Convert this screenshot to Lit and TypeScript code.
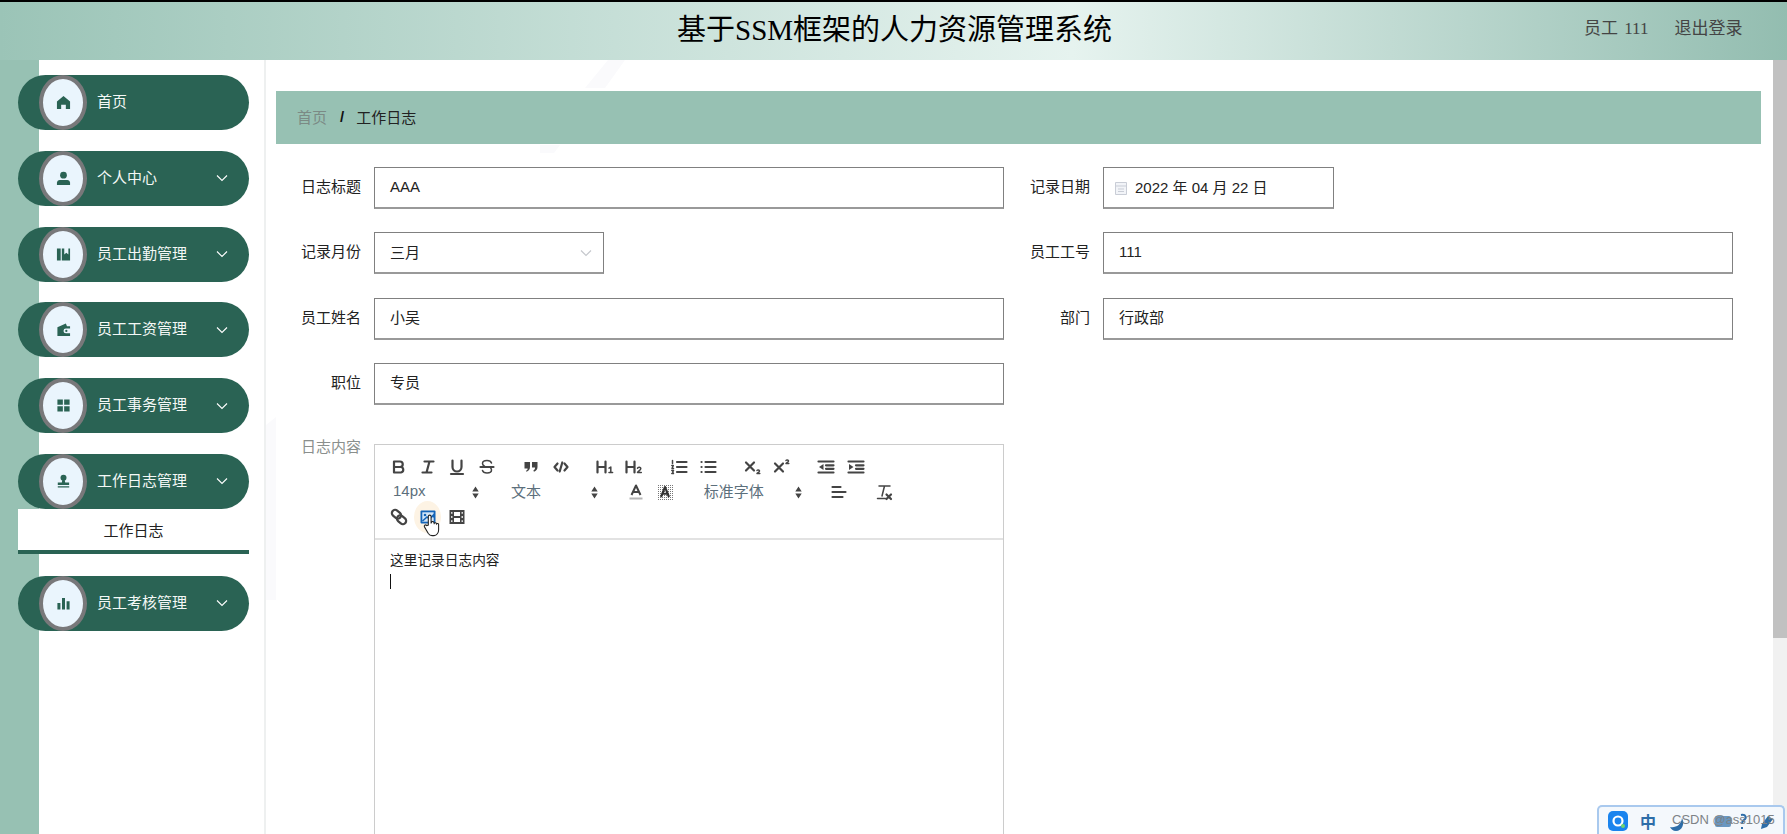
import { LitElement, html, css, svg } from "lit";
import { customElement } from "lit/decorators.js";

const g = (body: unknown) => html`<svg viewBox="0 0 18 18" width="18" height="18">${body}</svg>`;

const menuIcons: Record<string, unknown> = {
  home: svg`<path d="M8 1 1 7v8h4.500v-4.500h5V15H15V7z" fill="#2a6354"/>`,
  user: svg`<circle cx="8" cy="4.500" r="3.600" fill="#2a6354"/><path d="M1 15v-2.500c0-1.800 1.400-3 3-3h8c1.600 0 3 1.200 3 3V15z" fill="#2a6354"/>`,
  book: svg`<path d="M1 1.500h4v13H1zM6.200 1.500h2.600v6.500l2.200-1.800 2.200 1.800V1.500H15v13H6.200z" fill="#2a6354"/>`,
  wallet: svg`<path d="M1.500 5.500 10.500 1.500l1.200 3h3.300v2.500h-4.500a2.500 2.500 0 0 0 0 5h4.500V15H1.500z" fill="#2a6354"/><circle cx="11" cy="9.500" r="1.200" fill="#2a6354"/>`,
  grid: svg`<path d="M1.500 1.500h5.800v5.800H1.500zM8.700 1.500h5.800v5.800H8.700zM1.500 8.700h5.800v5.800H1.500zM8.700 8.700h5.800v5.800H8.700z" fill="#2a6354"/>`,
  stamp: svg`<circle cx="8" cy="4" r="3.200" fill="#2a6354"/><path d="M6.800 6h2.400l.6 3h4.200v2.600H1.900V9h4.300zM1.900 13h12.200v1.400H1.900z" fill="#2a6354"/>`,
  chart: svg`<path d="M1.500 7.500h3.200v7H1.500zM6.400 2h3.200v12.500H6.400zM11.300 5.500h3.200v9h-3.200z" fill="#2a6354"/>`,
};

const stroke = "fill:none;stroke:#444;stroke-width:2.200;stroke-linecap:round;stroke-linejoin:round";
const thin = "fill:none;stroke:#444;stroke-width:1.500;stroke-linecap:round;stroke-linejoin:round";
const tools: Record<string, unknown> = {
  bold: g(svg`<path style=${stroke} d="M4 3.500h6a2.700 2.700 0 0 1 0 5.500H4zM4 9h7a2.800 2.800 0 0 1 0 5.500H4z"/>`),
  italic: g(svg`<path style=${stroke} d="M5.500 3.500h9M3.500 14.500h9M10.500 3.500 7.500 14.500"/>`),
  underline: g(svg`<path style=${stroke} d="M4.500 2.500v6.500a4.500 4.500 0 0 0 9 0V2.500" stroke-width="1.700"/><path style=${stroke} d="M3 16h12"/>`),
  strike: g(svg`<path style=${thin} d="M13.500 5c-.5-1.600-2.200-2.500-4.500-2.500-2.700 0-4.500 1.200-4.500 3 0 1.200.7 2 2 2.700M4.500 12.500c.5 1.700 2.200 2.500 4.500 2.500 2.700 0 4.500-1.200 4.500-3 0-.8-.3-1.400-.8-2"/><path style=${stroke} d="M2.500 9h13"/>`),
  quote: g(svg`<path fill="#444" d="M2.500 4H8v5c0 2.500-1.500 4-3.500 4.800l-.7-1.300C5 12.800 5.600 12 5.600 10.500H2.500zM10 4h5.500v5c0 2.500-1.500 4-3.500 4.800l-.7-1.300c1.200-.7 1.800-1.500 1.800-3H10z"/>`),
  code: g(svg`<path style=${stroke} stroke-width="1.700" d="M5.500 5.500 2.500 9l3 3.500M12.500 5.500l3 3.500-3 3.500M10.300 4.500l-2.600 9"/>`),
  h1: g(svg`<path style=${stroke} d="M1.500 3.500v11M9.500 3.500v11M1.500 9h8"/><path style=${thin} d="M13 10.200 14.800 9v5.500M13 14.500h3.600"/>`),
  h2: g(svg`<path style=${stroke} d="M1.500 3.500v11M9.500 3.500v11M1.500 9h8"/><path style=${thin} d="M12.500 10.300c.3-1 2.900-1.500 3.300 0 .3 1.500-2.300 2.700-3.300 4.200h3.800"/>`),
  ol: g(svg`<path style=${stroke} d="M7 4h9.500M7 9h9.500M7 14h9.500"/><path style=${thin} d="M2.500 2.500v3M1.800 7.500h1.500L2 10.500h1.500M1.800 12.500h1.700l-.8 1.500.8 1.500H1.800"/>`),
  ul: g(svg`<path style=${stroke} d="M6.500 4h10M6.500 9h10M6.500 14h10M2.500 4h.1M2.500 9h.1M2.500 14h.1"/>`),
  sub: g(svg`<path style=${stroke} d="M2 4.500l8 8M10 4.500l-8 8" stroke-width="2.400"/><path style=${thin} d="M13 12.500c.3-.6 2.400-.8 2.500.4 0 1-1.500 1.600-2.500 2.600h2.800"/>`),
  sup: g(svg`<path style=${stroke} d="M2 5.500l8 8M10 5.500l-8 8" stroke-width="2.400"/><path style=${thin} d="M13 2.500c.3-.6 2.400-.8 2.500.4 0 1-1.500 1.600-2.500 2.600h2.800"/>`),
  outdent: g(svg`<path style=${stroke} d="M1.500 3.500h15M9 7.300h7.500M9 10.800h7.500M1.500 14.500h15"/><path fill="#444" d="M6.500 6v6L2 9z"/>`),
  indent: g(svg`<path style=${stroke} d="M1.500 3.500h15M9 7.300h7.500M9 10.800h7.500M1.500 14.500h15"/><path fill="#444" d="M2 6v6l4.500-3z"/>`),
  color: g(svg`<path style="fill:none;stroke:#444;stroke-width:2;stroke-linejoin:round" d="M4.500 12 9 2.500l4.500 9.500M6 9h6"/><path style="stroke:#b5b5b5;stroke-width:2" d="M2.500 15.500h13"/>`),
  background: g(svg`<defs><pattern id="dots" width="2" height="2" patternUnits="userSpaceOnUse"><rect width="1" height="1" fill="#777"/></pattern></defs><rect x="1" y="1" width="16" height="16" fill="url(#dots)"/><path style="fill:none;stroke:#333;stroke-width:2.100;stroke-linejoin:round" d="M5 14 9 4l4 10M6.300 10.800h5.400"/>`),
  align: g(svg`<path style=${stroke} d="M2.500 4h8M2.500 9h13M2.500 14h10"/>`),
  clean: g(svg`<path style=${thin} d="M4 3h11M9.500 3 7 13M2.500 15.500h8"/><path style=${stroke} d="M11.500 11.500l4.500 4.500M16 11.500l-4.500 4.500"/>`),
  link: g(svg`<rect x="1.500" y="3" width="10" height="6.500" rx="3.200" transform="rotate(40 6.500 6.200)" style=${stroke}/><rect x="6.500" y="8.500" width="10" height="6.500" rx="3.200" transform="rotate(40 11.500 11.800)" style=${stroke}/>`),
  image: g(svg`<rect x="1.500" y="2.500" width="15" height="13" rx="1" fill="#1565b8"/><rect x="3.300" y="4.300" width="11.400" height="9.400" fill="#d4e6f8"/><circle cx="6" cy="7" r="1.300" fill="#1565b8"/><path d="M3.500 13 8 9l2.500 2 4-4v2.500" fill="none" stroke="#1565b8" stroke-width="1.600"/>`),
  video: g(svg`<path fill="#444" fill-rule="evenodd" d="M1.500 2h15v14h-15zM6 4v4h6V4zM6 10v4h6v-4zM3.200 4v1.800h1.200V4zM13.600 4v1.800h1.200V4zM3.200 8.100v1.800h1.200V8.100zM13.600 8.100v1.800h1.200V8.100zM3.200 12.200V14h1.200v-1.800zM13.600 12.200V14h1.200v-1.800z"/>`),
};

const updown = html`<svg class="updown" viewBox="0 0 8 14" width="9" height="15"><path d="M4 1.500 7 6H1zM4 12.500 1 8h6z" fill="#444"/></svg>`;
const chevron = html`<svg class="chev" viewBox="0 0 14 10" width="14" height="10"><path d="M2 2.500l5 5 5-5" fill="none" stroke="currentColor" stroke-width="1.100"/></svg>`;

@customElement("app-root")
export class AppRoot extends LitElement {
  static styles = css`
    :host {
      display: block;
      height: 834px;
      overflow: hidden;
      position: relative;
      font-family: "Liberation Sans", "Noto Sans CJK SC", sans-serif;
      font-size: 15px;
      color: #222;
      background: #fff;
    }
    .top {
      height: 58px;
      border-top: 2px solid #000;
      position: relative;
      background: linear-gradient(90deg, #9bc4b7 0%, #e6f3ef 60%, #93bdb0 100%);
      font-family: "Liberation Serif", "Noto Sans CJK SC", serif;
    }
    .title {
      padding: 10px 0 0 677px;
      font-size: 29px;
      line-height: 36px;
      color: #000;
    }
    .who {
      position: absolute;
      top: 15px;
      left: 1584px;
      display: flex;
      gap: 26px;
      font-size: 17px;
      line-height: 24px;
      word-spacing: 2px;
      color: #444;
    }
    .body {
      display: flex;
      height: 774px;
    }
    .strip {
      width: 39px;
      background: #97c1b3;
      flex: none;
    }
    .side {
      width: 225px;
      flex: none;
      border-right: 2px solid #eef0f0;
      position: relative;
    }
    .menu {
      position: absolute;
      left: -21px;
      top: 15px;
      width: 231px;
      display: flex;
      flex-direction: column;
    }
    .pill {
      height: 55px;
      border-radius: 28px;
      background: #2a6354;
      color: #f4f8f6;
      display: flex;
      align-items: center;
      margin-bottom: 20.800px;
      font-size: 15px;
      flex: none;
    }
    .pill.open { margin-bottom: 0; }
    .bubble {
      width: 40px;
      height: 47px;
      border-radius: 50%;
      background: #eaf5fd;
      border: 4px solid #78787a;
      margin-left: 21px;
      display: flex;
      align-items: center;
      justify-content: center;
      flex: none;
    }
    .label {
      margin-left: 10px;
      flex: 1;
      padding-bottom: 4px;
    }
    .chev {
      margin-right: 20px;
      color: #fff;
    }
    .sub {
      height: 41px;
      line-height: 43px;
      text-align: center;
      border-bottom: 4px solid #2a6354;
      margin-bottom: 22px;
      font-size: 15px;
      color: #222;
      background: #fff;
    }
    .main {
      flex: 1;
      padding: 31px 12px 0 10px;
      min-width: 0;
      position: relative;
      z-index: 0;
    }
    .decor {
      position: absolute;
      left: 0;
      top: 0;
      z-index: -1;
    }
    .crumb {
      height: 53px;
      background: #97c1b3;
      display: flex;
      align-items: center;
      padding: 0 0 3px 21px;
      box-sizing: border-box;
    }
    .crumb .home { color: #7b8a85; }
    .crumb .sep {
      color: #111;
      font-weight: 700;
      margin: 0 12px 0 13px;
    }
    .form {
      display: grid;
      grid-template-columns: 630px 630px;
      column-gap: 99px;
      row-gap: 23.300px;
      padding: 23px 0 0 98px;
    }
    .field {
      display: flex;
      height: 42px;
      position: relative;
    }
    .field > .name {
      position: absolute;
      right: 100%;
      margin-right: 13px;
      line-height: 40px;
      white-space: nowrap;
    }
    .box {
      box-sizing: border-box;
      width: 100%;
      height: 42px;
      border: 1px solid #808080;
      border-bottom: 2px solid #999;
      padding: 0 15px;
      line-height: 37px;
      background: #fff;
    }
    .box.date {
      width: 231px;
      padding-left: 10px;
      display: flex;
      align-items: center;
      gap: 7px;
    }
    .box.select {
      width: 230px;
      display: flex;
      align-items: center;
      justify-content: space-between;
      padding-right: 10px;
    }
    .box.select .chev { margin: 0; color: #c4c7cc; }
    .editor-row {
      display: flex;
      padding: 39px 0 0 98px;
    }
    .editor-row .name {
      width: 0;
      white-space: nowrap;
      direction: rtl;
      position: relative;
      color: #8a8f8d;
      line-height: 20px;
      left: -13px;
      top: -7px;
    }
    .editor {
      width: 630px;
      box-sizing: border-box;
      border: 1px solid #ccc;
      height: 500px;
      background: #fff;
    }
    .toolbar {
      height: 95px;
      box-sizing: border-box;
      border-bottom: 2px solid #e2e2e2;
      padding: 10px 0 0 9px;
      display: flex;
      flex-direction: column;
    }
    .tool-row {
      display: flex;
      height: 25px;
    }
    .group {
      display: flex;
      margin-right: 15px;
    }
    .btn {
      width: 29.400px;
      height: 25px;
      display: flex;
      align-items: center;
      justify-content: center;
      flex: none;
      position: relative;
    }
    .btn svg { position: relative; }
    .picker {
      display: flex;
      align-items: center;
      justify-content: space-between;
      padding: 0 7px 3px 9px;
      box-sizing: border-box;
      color: #5c6f7c;
      margin-right: 15px;
      height: 25px;
    }
    .picker .updown { margin-top: 3px; }
    .btn .halo {
      position: absolute;
      width: 27px;
      height: 32px;
      border-radius: 50%;
      background: #fdf3e4;
      top: -4px;
      left: 1px;
    }
    .btn .hand {
      position: absolute;
      left: 10px;
      top: 8px;
    }
    .content {
      padding: 10px 15px;
      font-size: 13.700px;
      line-height: 21px;
      color: #222;
    }
    .caret {
      width: 1px;
      height: 15px;
      background: #111;
      margin-top: 3px;
    }
    .scroll {
      width: 14px;
      flex: none;
      background: #f1f1f1;
    }
    .thumb {
      height: 578px;
      background: #c1c1c1;
    }
    .ime {
      position: absolute;
      left: 1597px;
      top: 805px;
      width: 188px;
      height: 29px;
      box-sizing: border-box;
      border: 2px solid #a9c9ee;
      border-bottom: 0;
      border-radius: 5px 5px 0 0;
      background: #f4f8fc;
      display: flex;
      align-items: center;
      padding: 0 0 0 9px;
      color: #2d6da8;
      font-size: 16px;
      font-weight: 700;
    }
    .ime .q {
      width: 20px;
      height: 20px;
      border-radius: 5px;
      background: #1a84ee;
      display: flex;
      align-items: center;
      justify-content: center;
      margin-right: 12px;
      flex: none;
    }
    .ime .glyphs {
      position: absolute;
      left: 69px;
      top: 3px;
    }
    .ime .mark {
      position: absolute;
      left: 73px;
      top: 4px;
      color: #7d8286;
      font-size: 13px;
      font-weight: 400;
      line-height: 18px;
      white-space: nowrap;
    }
  `;

  private pill(icon: string, text: string, arrow = true, open = false) {
    return html`
      <div class="pill ${open ? "open" : ""}">
        <span class="bubble"><svg viewBox="0 0 16 16" width="15" height="15">${menuIcons[icon]}</svg></span>
        <span class="label">${text}</span>
        ${arrow ? chevron : ""}
      </div>
    `;
  }

  private btn(name: string) {
    return html`<span class="btn">${tools[name]}</span>`;
  }

  render() {
    return html`
      <div class="top">
        <div class="title">基于SSM框架的人力资源管理系统</div>
        <div class="who"><span>员工 111</span><span>退出登录</span></div>
      </div>
      <div class="body">
        <div class="strip"></div>
        <div class="side">
          <div class="menu">
            ${this.pill("home", "首页", false)}
            ${this.pill("user", "个人中心")}
            ${this.pill("book", "员工出勤管理")}
            ${this.pill("wallet", "员工工资管理")}
            ${this.pill("grid", "员工事务管理")}
            ${this.pill("stamp", "工作日志管理", true, true)}
            <div class="sub">工作日志</div>
            ${this.pill("chart", "员工考核管理")}
          </div>
        </div>
        <div class="main">
          <svg class="decor" width="600" height="774" viewBox="0 0 600 774">
            <path d="M342 0h17l-20 28h-20zM274 85h20l-6 8h-14zM0 365l10-8v183H0z" fill="#fafafc"/>
          </svg>
          <div class="crumb">
            <span class="home">首页</span><span class="sep">/</span><span>工作日志</span>
          </div>
          <div class="form">
            <div class="field"><span class="name">日志标题</span><div class="box">AAA</div></div>
            <div class="field"><span class="name">记录日期</span>
              <div class="box date">
                <svg viewBox="0 0 14 16" width="14" height="16"><path d="M1.500 2.500h11v12h-11zM1.500 6h11M4 9h6M4 11.500h6" fill="#f2f4f8" stroke="#c9cdd6"/></svg>
                2022 年 04 月 22 日
              </div>
            </div>
            <div class="field"><span class="name">记录月份</span><div class="box select">三月${chevron}</div></div>
            <div class="field"><span class="name">员工工号</span><div class="box">111</div></div>
            <div class="field"><span class="name">员工姓名</span><div class="box">小吴</div></div>
            <div class="field"><span class="name">部门</span><div class="box">行政部</div></div>
            <div class="field"><span class="name">职位</span><div class="box">专员</div></div>
          </div>
          <div class="editor-row">
            <span class="name">日志内容</span>
            <div class="editor">
              <div class="toolbar">
                <div class="tool-row">
                  <span class="group">${["bold", "italic", "underline", "strike"].map((n) => this.btn(n))}</span>
                  <span class="group">${["quote", "code"].map((n) => this.btn(n))}</span>
                  <span class="group">${["h1", "h2"].map((n) => this.btn(n))}</span>
                  <span class="group">${["ol", "ul"].map((n) => this.btn(n))}</span>
                  <span class="group">${["sub", "sup"].map((n) => this.btn(n))}</span>
                  <span class="group">${["outdent", "indent"].map((n) => this.btn(n))}</span>
                </div>
                <div class="tool-row">
                  <span class="picker" style="width:103px">14px${updown}</span>
                  <span class="picker" style="width:104px">文本${updown}</span>
                  <span class="group">${["color", "background"].map((n) => this.btn(n))}</span>
                  <span class="picker" style="width:115px">标准字体${updown}</span>
                  <span class="group">${this.btn("align")}</span>
                  <span class="group">${this.btn("clean")}</span>
                </div>
                <div class="tool-row">
                  <span class="group">
                    ${this.btn("link")}
                    <span class="btn">
                      <span class="halo"></span>
                      ${tools.image}
                      <svg class="hand" viewBox="0 0 16 22" width="17" height="24"><path d="M5 11V3a1.300 1.300 0 0 1 2.600 0v6.500l.4-1a1.200 1.200 0 0 1 2.300.4l.2.600a1.200 1.200 0 0 1 2.200.5 1.100 1.100 0 0 1 2 .6v5c0 2.600-1.700 5.400-4.300 5.400H8.500c-1.600 0-2.700-.8-3.500-2L1.500 13c-1-1.500.8-2.800 2-1.500z" fill="#fff" stroke="#222" stroke-width="1"/></svg>
                    </span>
                    ${this.btn("video")}
                  </span>
                </div>
              </div>
              <div class="content">
                <div>这里记录日志内容</div>
                <div class="caret"></div>
              </div>
            </div>
          </div>
        </div>
        <div class="scroll"><div class="thumb"></div></div>
      </div>
      <div class="ime">
        <span class="q"><svg viewBox="0 0 16 16" width="16" height="16"><circle cx="8" cy="8" r="4.500" fill="none" stroke="#fff" stroke-width="2.200"/><circle cx="13" cy="13" r="2" fill="#6fd46f"/></svg></span>
        <span>中</span>
        <svg class="glyphs" viewBox="0 0 110 22" width="110" height="22">
          <path d="M2 17c6 1 11-2 12-9 3 6 0 13-6 13-3 0-5-2-6-4z" fill="#2d6da8"/>
          <rect x="47" y="6" width="16" height="11" rx="2" fill="#2d6da8" opacity=".7"/>
          <path d="M73 5c5-1 6 3 3 5-2 1-2 2-2 4M74 17v2" fill="none" stroke="#2d6da8" stroke-width="2"/>
          <path d="M94 14l6-8 5 3-6 8-6 2z" fill="#2d6da8"/>
        </svg>
        <span class="mark">CSDN @ass1015</span>
      </div>
    `;
  }
}
